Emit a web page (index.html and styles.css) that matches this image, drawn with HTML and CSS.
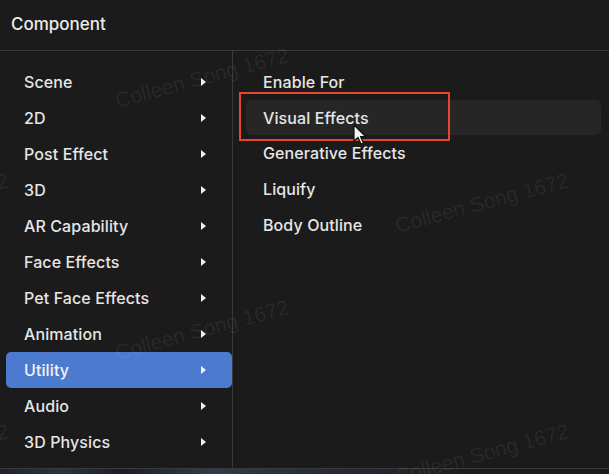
FILE: index.html
```html
<!DOCTYPE html>
<html>
<head>
<meta charset="utf-8">
<link rel="stylesheet" href="styles.css">
</head>
<body>
<div class="panel">
  <div class="header">Component</div>
  <div class="body">
    <ul class="menu left">
      <li class="item"><span>Scene</span><i class="arrow"></i></li>
      <li class="item"><span>2D</span><i class="arrow"></i></li>
      <li class="item"><span>Post Effect</span><i class="arrow"></i></li>
      <li class="item"><span>3D</span><i class="arrow"></i></li>
      <li class="item"><span>AR Capability</span><i class="arrow"></i></li>
      <li class="item"><span>Face Effects</span><i class="arrow"></i></li>
      <li class="item"><span>Pet Face Effects</span><i class="arrow"></i></li>
      <li class="item"><span>Animation</span><i class="arrow"></i></li>
      <li class="item selected"><span>Utility</span><i class="arrow"></i></li>
      <li class="item"><span>Audio</span><i class="arrow"></i></li>
      <li class="item"><span>3D Physics</span><i class="arrow"></i></li>
    </ul>
    <ul class="menu right">
      <li class="item"><span>Enable For</span></li>
      <li class="item hover"><span>Visual Effects</span></li>
      <li class="item"><span>Generative Effects</span></li>
      <li class="item"><span>Liquify</span></li>
      <li class="item"><span>Body Outline</span></li>
    </ul>
  </div>
  <div class="strip"></div>

  <div class="mark m1">Colleen Song 1672</div>
  <div class="mark m2">Colleen Song 1672</div>
  <div class="mark m3">Colleen Song 1672</div>
  <div class="mark m4">Colleen Song 1672</div>
  <div class="mark m5">Colleen Song 1672</div>
  <div class="mark m6">Colleen Song 1672</div>

  <div class="highlight-box"></div>
  <svg class="cursor" width="14" height="22" viewBox="0 0 14 22">
    <path d="M1 1 L1 17 L5 13.5 L8 20 L10.5 19 L7.5 12.5 L12.5 12.5 Z" fill="#f4f4f4" stroke="#111" stroke-width="1.2" stroke-linejoin="round"/>
  </svg>
</div>
</body>
</html>
```
FILE: styles.css
```css
html, body {
  margin: 0;
  padding: 0;
  background: #1b1b1b;
}
.panel {
  position: relative;
  width: 609px;
  height: 474px;
  overflow: hidden;
  background: #1b1b1b;
  font-family: Inter, "Noto Sans", sans-serif;
  color: #e6e6e6;
  display: flex;
  flex-direction: column;
}
.header {
  height: 51px;
  box-sizing: border-box;
  padding: 14px 0 0 11px;
  font-size: 17px;
  font-weight: 500;
  color: #ececec;
  border-bottom: 1px solid #3a3a3a;
}
.body {
  display: flex;
  height: 417px;
  border-bottom: 1px solid #3a3a3a;
}
.menu {
  list-style: none;
  margin: 0;
  padding: 13px 0 0 0;
}
.menu.left {
  width: 232px;
  border-right: 1px solid #3a3a3a;
  box-sizing: content-box;
}
.menu.right {
  flex: 1;
  padding-left: 13px;
  padding-right: 8px;
}
.item {
  height: 36px;
  display: flex;
  align-items: center;
  justify-content: space-between;
  font-size: 16px;
  font-weight: 500;
  letter-spacing: 0.1px;
}
.left .item {
  margin-left: 6px;
  padding: 0 26px 0 18px;
  border-radius: 5px;
}
.left .item.selected {
  background: #4c7ace;
  color: #f2f4fa;
}
.right .item {
  height: 35.7px;
  padding-left: 17px;
  border-radius: 5px;
}
.right .item.hover {
  background: #262626;
}
.arrow {
  width: 0;
  height: 0;
  border-top: 4px solid transparent;
  border-bottom: 4px solid transparent;
  border-left: 5px solid #f0f0f0;
}
.strip {
  flex: 1;
  background: linear-gradient(90deg, #1d222c 0%, #2a3345 10%, #1a1e26 20%, #313a4e 35%, #272d3a 50%, #1b1b1b 80%);
}
.mark {
  position: absolute;
  font-family: "Liberation Sans", Arial, sans-serif;
  font-size: 21px;
  color: rgba(255, 255, 255, 0.065);
  white-space: nowrap;
  transform: translate(-50%, -50%) rotate(-15deg);
  pointer-events: none;
}
.m1 { left: 202px; top: 78px; }
.m2 { left: 482px; top: 203px; }
.m3 { left: 202px; top: 330px; }
.m4 { left: 482px; top: 454px; }
.m5 { left: -78px; top: 203px; }
.m6 { left: -78px; top: 454px; }
.highlight-box {
  position: absolute;
  left: 239px;
  top: 92px;
  width: 207px;
  height: 45px;
  border: 2px solid #e8462c;
  pointer-events: none;
}
.cursor {
  position: absolute;
  left: 353px;
  top: 124px;
}
```
